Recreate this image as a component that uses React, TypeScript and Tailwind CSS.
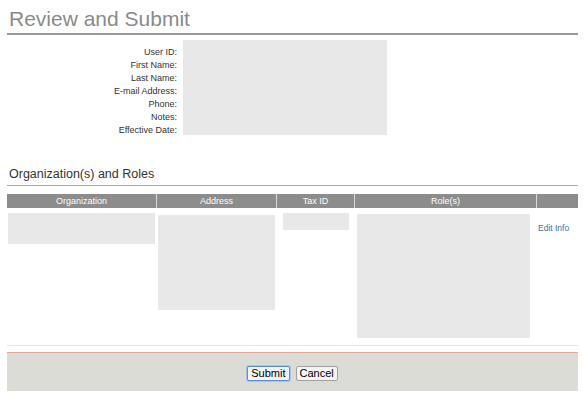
import React from 'react';

const labels = ['User ID:', 'First Name:', 'Last Name:', 'E-mail Address:', 'Phone:', 'Notes:', 'Effective Date:'];

const columns = [
  { title: 'Organization', w: 'w-[150px]' },
  { title: 'Address', w: 'w-[120px]' },
  { title: 'Tax ID', w: 'w-[78px]' },
  { title: 'Role(s)', w: 'w-[182px]' },
  { title: '', w: 'flex-1' },
];

function App() {
  return (
    <div
      className="w-[585px] h-[399px] bg-white px-[7px] overflow-hidden"
      style={{ fontFamily: '"Liberation Sans", Arial, sans-serif' }}
    >
      {/* page title */}
      <div className="pt-[7px] pl-[2px] pb-[2px] text-[21px] leading-[24px] text-[#8a8a8a]">
        Review and Submit
      </div>
      <div className="h-[2px] bg-[#9a9a9a]" />

      {/* user details */}
      <div className="flex mt-[5px]">
        <div className="w-[170px] pt-[6px] text-right text-[9px] leading-[13px] text-[#333]">
          {labels.map((l) => (
            <div key={l}>{l}</div>
          ))}
        </div>
        <div className="ml-[6px] w-[204px] h-[95px] bg-[#e8e8e8]" />
      </div>

      {/* organizations */}
      <div className="mt-[29px] pl-[2px] text-[12.5px] leading-[16px] text-[#333]">
        Organization(s) and Roles
      </div>
      <div className="mt-[3px] h-px bg-[#a8a8a8]" />

      <div className="mt-[8px] flex h-[14px] bg-[#8c8c8c]">
        {columns.map((c, i) => (
          <div
            key={i}
            className={`${c.w} ${i < columns.length - 1 ? 'border-r border-[#d8d8d8]' : ''} text-center text-[9px] leading-[14px] text-white`}
          >
            {c.title}
          </div>
        ))}
      </div>

      <div className="flex h-[137px]">
        <div className="w-[150px]">
          <div className="mt-[5px] ml-px w-[147px] h-[31px] bg-[#e8e8e8]" />
        </div>
        <div className="w-[120px]">
          <div className="mt-[7px] ml-px w-[117px] h-[95px] bg-[#e8e8e8]" />
        </div>
        <div className="w-[78px]">
          <div className="mt-[5px] ml-[6px] w-[66px] h-[17px] bg-[#e8e8e8]" />
        </div>
        <div className="w-[182px]">
          <div className="mt-[6px] ml-[2px] w-[173px] h-[124px] bg-[#e8e8e8]" />
        </div>
        <div className="flex-1 pl-px pt-[6px]">
          <a href="#" className="text-[8.5px] leading-[11px] text-[#3d6fa8]">
            Edit Info
          </a>
        </div>
      </div>

      <div className="h-px bg-[#e2e2e2]" />

      {/* actions */}
      <div className="mt-[6px] h-[39px] border-t border-[#e4a696] bg-[#dcdcd7] flex items-center justify-center gap-[6px] pt-[2px]">
        <button className="h-[15px] px-[3px] text-[11px] leading-[13px] text-black bg-[#f4f4f4] border border-[#5b8dd0] rounded-[2px] shadow-[0_0_0_1px_#a9c4ea]">
          Submit
        </button>
        <button className="h-[15px] px-[3px] text-[11px] leading-[13px] text-black bg-[#f4f4f4] border border-[#a0a0a0] rounded-[2px]">
          Cancel
        </button>
      </div>
    </div>
  );
}

export default App;
